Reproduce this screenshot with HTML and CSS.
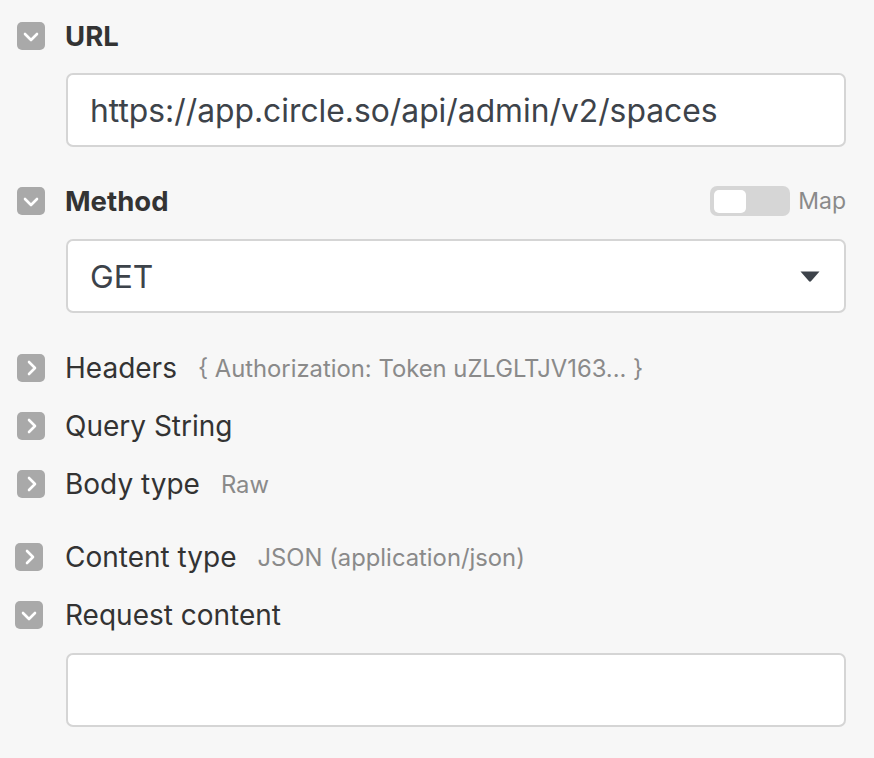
FILE: index.html
```html
<!DOCTYPE html>
<html lang="en">
<head>
    <meta charset="UTF-8">
    <title>HTTP Request</title>
    <link rel="stylesheet" href="styles.css">
</head>
<body>

<div class="panel">
    <div class="field-head">
        <span class="toggle open"><svg viewBox="0 0 28 28"><path d="M8 12l6 6 6-6"/></svg></span>
        <span class="label bold">URL</span>
    </div>
    <div class="input">https://app.circle.so/api/admin/v2/spaces</div>

    <div class="field-head method">
        <span class="toggle open"><svg viewBox="0 0 28 28"><path d="M8 12l6 6 6-6"/></svg></span>
        <span class="label bold">Method</span>
        <span class="map">
            <span class="switch"><span class="knob"></span></span>
            Map
        </span>
    </div>
    <div class="input select">
        GET
        <svg class="caret" viewBox="0 0 22 13"><path d="M1.5 1.5h19l-8.3 9.6a1.6 1.6 0 0 1-2.4 0z"/></svg>
    </div>

    <div class="field-head sub first">
        <span class="toggle"><svg viewBox="0 0 28 28"><path d="M12 8l6 6-6 6"/></svg></span>
        <span class="label">Headers</span>
        <span class="hint">{ Authorization: Token uZLGLTJV163... }</span>
    </div>
    <div class="field-head sub">
        <span class="toggle"><svg viewBox="0 0 28 28"><path d="M12 8l6 6-6 6"/></svg></span>
        <span class="label">Query String</span>
    </div>
    <div class="field-head sub">
        <span class="toggle"><svg viewBox="0 0 28 28"><path d="M12 8l6 6-6 6"/></svg></span>
        <span class="label">Body type</span>
        <span class="hint">Raw</span>
    </div>

    <div class="body-group">
        <div class="field-head sub">
            <span class="toggle"><svg viewBox="0 0 28 28"><path d="M12 8l6 6-6 6"/></svg></span>
            <span class="label">Content type</span>
            <span class="hint">JSON (application/json)</span>
        </div>
        <div class="field-head sub">
            <span class="toggle open"><svg viewBox="0 0 28 28"><path d="M8 12l6 6 6-6"/></svg></span>
            <span class="label">Request content</span>
        </div>
    </div>
    <div class="input textarea"></div>
</div>

</body>
</html>
```

FILE: styles.css
```css
body {
    margin: 0;
    background: #f7f7f7;
    font-family: Inter, "Noto Sans", sans-serif;
    color: #333;
}

.panel {
    padding: 22px 28px 20px 17px;
}

.field-head {
    display: flex;
    align-items: center;
    height: 28px;
}

.field-head.method {
    margin-top: 40px;
}

.field-head.sub {
    margin-top: 30px;
}

.field-head.sub.first {
    margin-top: 41px;
}

/* the body rows sit 2px further left in the original */
.body-group {
    margin-top: 45px;
    margin-left: -2px;
}

.body-group .field-head:first-child {
    margin-top: 0;
}

.body-group .label {
    margin-left: 22px;
}

.toggle {
    width: 28px;
    height: 28px;
    border-radius: 5px;
    background: #a9a9a9;
    flex-shrink: 0;
}

.toggle svg {
    display: block;
    width: 28px;
    height: 28px;
    fill: none;
    stroke: #fff;
    stroke-width: 2.6;
    stroke-linecap: round;
    stroke-linejoin: round;
}

.label {
    margin-left: 20px;
    font-size: 28px;
    color: #333;
}

.label.bold {
    font-weight: 700;
    font-size: 27.5px;
}

.hint {
    margin-left: 21px;
    font-size: 23.8px;
    color: #8a8a8a;
}

.map {
    margin-left: auto;
    display: flex;
    align-items: center;
    font-size: 23px;
    color: #8a8a8a;
}

.switch {
    width: 80px;
    height: 30px;
    margin-right: 8px;
    border-radius: 7px;
    background: #d6d6d6;
    display: flex;
    align-items: center;
    padding-left: 4px;
    box-sizing: border-box;
}

.knob {
    width: 32px;
    height: 23px;
    border-radius: 5px;
    background: #fff;
}

.input {
    margin: 23px 0 0 49px;
    height: 74px;
    box-sizing: border-box;
    border: 2px solid #d5d5d5;
    border-radius: 7px;
    background: #fff;
    padding: 0 23px 0 22px;
    display: flex;
    align-items: center;
    font-size: 31.8px;
    color: #3d434a;
}

.input.select {
    margin-top: 24px;
    justify-content: space-between;
}

.caret {
    width: 22px;
    height: 13px;
    fill: #3d434a;
}

.input.textarea {
    margin-top: 24px;
}
```
